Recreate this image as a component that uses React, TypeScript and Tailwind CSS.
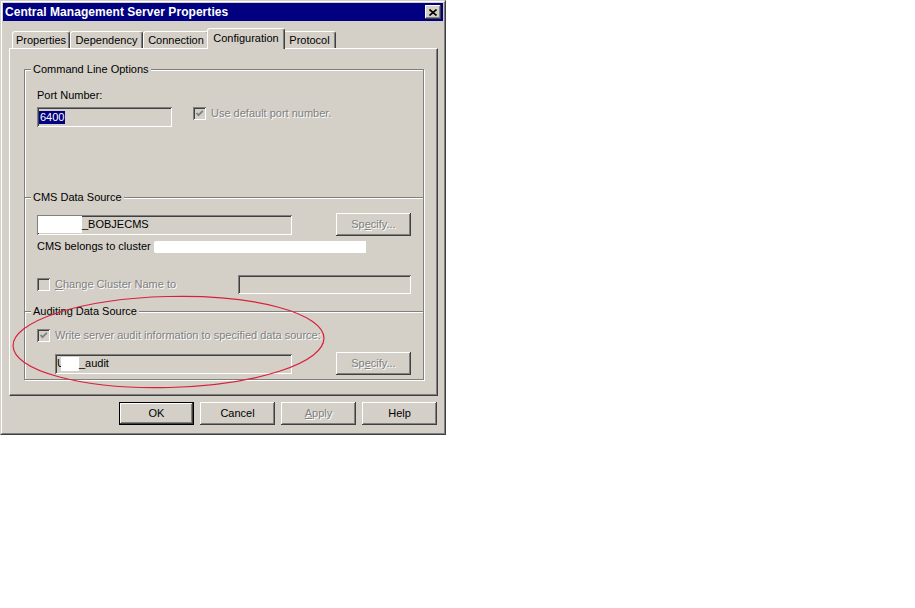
import React from "react";

const raised =
  "shadow-[inset_-1px_-1px_0_#404040,inset_1px_1px_0_#ffffff,inset_-2px_-2px_0_#808080]";
const sunken =
  "shadow-[inset_1px_1px_0_#808080,inset_-1px_-1px_0_#ffffff,inset_2px_2px_0_#404040,inset_-2px_-2px_0_#d4d0c8]";
const disabledText = "text-[#808080] [text-shadow:1px_1px_0_#ffffff]";

function Check({ checked }: { checked?: boolean }) {
  return (
    <div className={`w-[13px] h-[13px] shrink-0 bg-[#d4d0c8] flex items-center justify-center ${sunken}`}>
      {checked && (
        <svg width="9" height="9" viewBox="0 0 9 9">
          <path d="M1.5 4 L3.5 6.2 L7.8 1.8" fill="none" stroke="#808080" strokeWidth="1.8" />
        </svg>
      )}
    </div>
  );
}

function Field({ className, children }: { className: string; children?: React.ReactNode }) {
  return (
    <div className={`flex items-center pl-[2px] bg-[#d4d0c8] overflow-hidden whitespace-nowrap ${sunken} ${className}`}>
      {children}
    </div>
  );
}

function Button({ children, isDefault, disabled }: { children: React.ReactNode; isDefault?: boolean; disabled?: boolean }) {
  return (
    <div
      className={`w-[75px] h-[23px] flex items-center justify-center bg-[#d4d0c8] ${raised} ${
        isDefault ? "border border-black" : ""
      } ${disabled ? disabledText : "text-black"}`}
    >
      {children}
    </div>
  );
}

function Specify() {
  return (
    <Button disabled>
      <span>
        Sp<span className="underline">e</span>cify...
      </span>
    </Button>
  );
}

function GroupLabel({ children }: { children: React.ReactNode }) {
  return <div className="-mt-[7px] -ml-[6px] w-fit bg-[#d4d0c8] px-[2px] h-[13px]">{children}</div>;
}

function Tab({ label, width, selected }: { label: string; width: string; selected?: boolean }) {
  return (
    <div
      className={`${width} flex justify-center bg-[#d4d0c8] border-t border-l border-white border-r border-r-[#404040] rounded-t-[3px] shadow-[inset_-1px_0_0_#808080] ${
        selected ? "h-[21px] -mx-[2px] -mb-px relative z-10 pt-[3px]" : "h-[17px] pt-[2px]"
      }`}
    >
      {label}
    </div>
  );
}

export default function App() {
  return (
    <div className="w-[915px] h-[608px] bg-white font-['Liberation_Sans',Arial,sans-serif] text-[11px] leading-[13px] text-black">
      <div className="relative w-[446px] h-[435px] bg-[#d4d0c8] border border-t-[#d4d0c8] border-l-[#d4d0c8] border-b-[#404040] border-r-[#404040]">
        <div className="h-full border border-t-white border-l-white border-b-[#808080] border-r-[#808080] p-px flex flex-col">
          {/* title bar */}
          <div className="h-[18px] bg-[#000080] flex items-center justify-between pl-[2px] pr-[2px]">
            <span className="text-white font-bold text-[12px] tracking-[0.05px]">Central Management Server Properties</span>
            <div className={`w-[16px] h-[14px] bg-[#d4d0c8] flex items-center justify-center ${raised}`}>
              <svg width="8" height="7" viewBox="0 0 8 7">
                <path d="M0.5 0.5 L7.5 6.5 M7.5 0.5 L0.5 6.5" stroke="#000" strokeWidth="1.6" />
              </svg>
            </div>
          </div>

          {/* tabs */}
          <div className="mt-[7px] h-[20px] flex items-end ml-[9px]">
            <Tab label="Properties" width="w-[58px]" />
            <Tab label="Dependency" width="w-[73px]" />
            <Tab label="Connection" width="w-[66px]" />
            <Tab label="Configuration" width="w-[78px]" selected />
            <Tab label="Protocol" width="w-[53px]" />
          </div>

          {/* panel */}
          <div className="ml-[6px] w-[429px] h-[348px] border border-t-white border-l-white border-b-[#404040] border-r-[#404040] shadow-[inset_-1px_-1px_0_#808080]">
            <div className="mt-[20px] ml-[14px] w-[400px] border border-[#808080] shadow-[inset_1px_1px_0_#ffffff,1px_1px_0_#ffffff]">
              {/* Command Line Options */}
              <div className="h-[127px] px-[12px] flex flex-col">
                <GroupLabel>Command Line Options</GroupLabel>
                <div className="mt-[13px]">Port Number:</div>
                <div className="mt-[5px] flex items-start">
                  <Field className="w-[135px] h-[20px]">
                    <span className="bg-[#000080] text-white px-px">6400</span>
                  </Field>
                  <div className="ml-[21px] flex items-center">
                    <Check checked />
                    <span className={`ml-[5px] ${disabledText}`}>Use default port number.</span>
                  </div>
                </div>
              </div>

              {/* CMS Data Source */}
              <div className="h-[114px] px-[12px] flex flex-col border-t border-[#808080] shadow-[inset_0_1px_0_#ffffff]">
                <GroupLabel>CMS Data Source</GroupLabel>
                <div className="mt-[9px] h-[23px] flex items-center justify-between">
                  <Field className="w-[255px] h-[20px] !pl-px">
                    <span className="w-[44px] h-[17px] bg-white shrink-0" />
                    <span>_BOBJECMS</span>
                  </Field>
                  <Specify />
                </div>
                <div className="mt-[4px] flex items-center h-[13px]">
                  <span>CMS belongs to cluster</span>
                  <span className="ml-[3px] w-[212px] h-[12px] bg-white rounded-l-[2px]" />
                </div>
                <div className="mt-[22px] h-[19px] flex items-center justify-between">
                  <div className="flex items-center">
                    <Check />
                    <span className={`ml-[5px] ${disabledText}`}>
                      <span className="underline">C</span>hange Cluster Name to
                    </span>
                  </div>
                  <Field className="w-[173px] h-[19px]" />
                </div>
              </div>

              {/* Auditing Data Source */}
              <div className="h-[68px] px-[12px] flex flex-col border-t border-[#808080] shadow-[inset_0_1px_0_#ffffff]">
                <GroupLabel>Auditing Data Source</GroupLabel>
                <div className="mt-[11px] flex items-center h-[13px]">
                  <Check checked />
                  <span className={`ml-[5px] ${disabledText}`}>Write server audit information to specified data source:</span>
                </div>
                <div className="mt-[10px] h-[23px] flex items-center justify-between">
                  <Field className="ml-[18px] w-[237px] h-[20px]">
                    <span>U</span>
                    <span className="-ml-[4px] w-[18px] h-[14px] bg-white shrink-0" />
                    <span>_audit</span>
                  </Field>
                  <Specify />
                </div>
              </div>
            </div>
          </div>

          {/* buttons */}
          <div className="mt-[6px] mr-[6px] flex justify-end gap-[6px]">
            <Button isDefault>OK</Button>
            <Button>Cancel</Button>
            <Button disabled>
              <span>
                <span className="underline">A</span>pply
              </span>
            </Button>
            <Button>Help</Button>
          </div>
        </div>

        {/* hand-drawn annotation */}
        <svg className="absolute left-0 top-0 pointer-events-none" width="446" height="435" viewBox="0 0 446 435">
          <ellipse cx="167.5" cy="341" rx="155.5" ry="45.5" fill="none" stroke="#d8203c" strokeWidth="1.2" transform="rotate(-1.5 167.5 341)" />
        </svg>
      </div>
    </div>
  );
}
